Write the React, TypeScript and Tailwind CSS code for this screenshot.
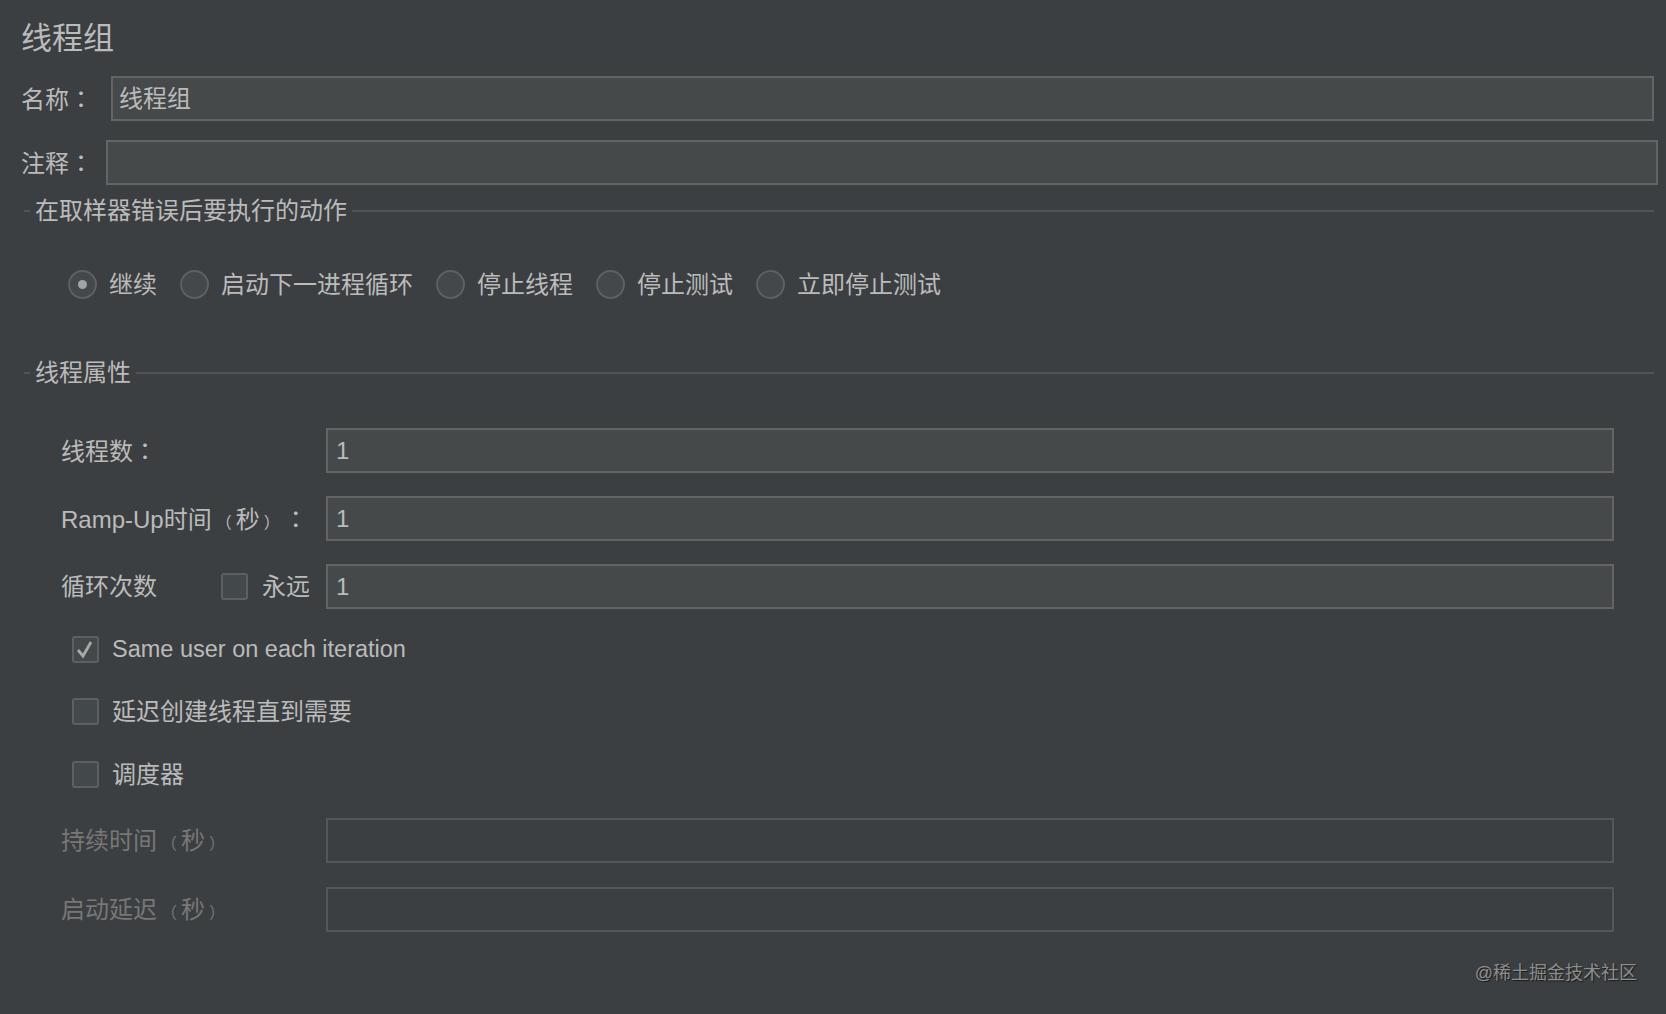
import React from "react";

function Radio({ checked, label }: { checked?: boolean; label: string }) {
  return (
    <div className="flex items-center">
      <div className="w-[29px] h-[29px] rounded-full border-2 border-[#5d6062] bg-[#43494a] flex items-center justify-center">
        {checked && <div className="w-[9px] h-[9px] rounded-full bg-[#a3a3a3]" />}
      </div>
      <span className="ml-[12px] text-[24px] leading-none text-[#bbbbbb]">{label}</span>
    </div>
  );
}

function Checkbox({ checked }: { checked?: boolean }) {
  return (
    <div className="w-[27px] h-[27px] shrink-0 rounded-[3px] border-2 border-[#5d6062] bg-[#43494a] flex items-center justify-center">
      {checked && (
        <svg width="23" height="23" viewBox="0 0 23 23">
          <polyline points="4,12 9,18 17,4" fill="none" stroke="#a8a8a8" strokeWidth="2.8" strokeLinejoin="miter" strokeLinecap="butt" />
        </svg>
      )}
    </div>
  );
}

function SectionHeader({ title }: { title: string }) {
  return (
    <div className="flex items-center h-[24px] ml-[3px]">
      <div className="w-[6px] h-[2px] bg-[#505355]" />
      <span className="ml-[5px] text-[24px] leading-none text-[#bbbbbb] whitespace-nowrap">{title}</span>
      <div className="flex-1 ml-[5px] h-[2px] bg-[#505355]" />
    </div>
  );
}

function Colon() {
  return <span className="font-['Noto_Sans_CJK_TC',sans-serif]">：</span>;
}

function Paren({ ch }: { ch: string }) {
  return <span className="inline-block w-[24px] text-center text-[16px] leading-none">{ch}</span>;
}

function Field({ value, disabled }: { value?: string; disabled?: boolean }) {
  return (
    <div
      className={
        disabled
          ? "flex-1 h-[45px] border-2 border-[#555657] bg-[#3c3f41] flex items-center pl-[8px] text-[24px] text-[#bbbbbb]"
          : "flex-1 h-[45px] border-2 border-[#646464] bg-[#45494a] flex items-center pl-[8px] text-[24px] text-[#bbbbbb]"
      }
    >
      {value}
    </div>
  );
}

export default function App() {
  return (
    <div className="relative w-[1666px] h-[1014px] bg-[#3c3f41] overflow-hidden font-['Liberation_Sans','Noto_Sans_CJK_SC',sans-serif] text-[#bbbbbb]">
      <div className="flex flex-col pl-[21px] pr-[12px] pt-[14px]">
        <div className="h-[48px] flex items-center text-[31px] leading-none">线程组</div>

        <div className="mt-[14px] flex items-center h-[45px]">
          <div className="w-[90px] text-[24px] leading-none whitespace-nowrap">
            名称<Colon />
          </div>
          <div className="flex-1 h-[45px] border-2 border-[#646464] bg-[#45494a] flex items-center pl-[6px] text-[24px] text-[#bbbbbb]">
            线程组
          </div>
        </div>

        <div className="mt-[19px] flex items-center h-[45px] mr-[-4px]">
          <div className="w-[85px] text-[24px] leading-none whitespace-nowrap">
            注释<Colon />
          </div>
          <Field />
        </div>

        <div className="mt-[14px]">
          <SectionHeader title="在取样器错误后要执行的动作" />
        </div>

        <div className="mt-[47px] h-[29px] flex items-center gap-[23px] pl-[47px]">
          <Radio checked label="继续" />
          <Radio label="启动下一进程循环" />
          <Radio label="停止线程" />
          <Radio label="停止测试" />
          <Radio label="立即停止测试" />
        </div>

        <div className="mt-[62px]">
          <SectionHeader title="线程属性" />
        </div>

        <div className="flex flex-col pl-[40px] pr-[40px]">
          <div className="mt-[43px] flex items-center h-[45px]">
            <div className="w-[265px] text-[24px] leading-none whitespace-nowrap">
              线程数<Colon />
            </div>
            <Field value="1" />
          </div>
          <div className="mt-[23px] flex items-center h-[45px]">
            <div className="w-[265px] text-[24px] leading-none whitespace-nowrap">
              Ramp-Up时间<Paren ch="（" />秒<Paren ch="）" /><Colon />
            </div>
            <Field value="1" />
          </div>
          <div className="mt-[23px] flex items-center h-[45px]">
            <div className="w-[265px] flex items-center text-[24px] leading-none whitespace-nowrap">
              <span className="w-[160px]">循环次数</span>
              <Checkbox />
              <span className="ml-[14px]">永远</span>
            </div>
            <Field value="1" />
          </div>
        </div>

        <div className="flex flex-col pl-[51px]">
          <div className="mt-[27px] h-[27px] flex items-center">
            <Checkbox checked />
            <span className="ml-[13px] text-[23.5px] leading-none">Same user on each iteration</span>
          </div>
          <div className="mt-[35px] h-[27px] flex items-center">
            <Checkbox />
            <span className="ml-[13px] text-[24px] leading-none">延迟创建线程直到需要</span>
          </div>
          <div className="mt-[36px] h-[27px] flex items-center">
            <Checkbox />
            <span className="ml-[13px] text-[24px] leading-none">调度器</span>
          </div>
        </div>

        <div className="flex flex-col pl-[40px] pr-[40px]">
          <div className="mt-[30px] flex items-center h-[45px]">
            <div className="w-[265px] text-[24px] leading-none whitespace-nowrap text-[#777777]">
              持续时间<Paren ch="（" />秒<Paren ch="）" />
            </div>
            <Field disabled />
          </div>
          <div className="mt-[24px] flex items-center h-[45px]">
            <div className="w-[265px] text-[24px] leading-none whitespace-nowrap text-[#777777]">
              启动延迟<Paren ch="（" />秒<Paren ch="）" />
            </div>
            <Field disabled />
          </div>
        </div>
      </div>

      <div className="absolute right-[29px] top-[964px] text-[18px] leading-none text-[#8e8e8e] [text-shadow:1px_1px_1px_rgba(0,0,0,0.6)]">
        @稀土掘金技术社区
      </div>
    </div>
  );
}
